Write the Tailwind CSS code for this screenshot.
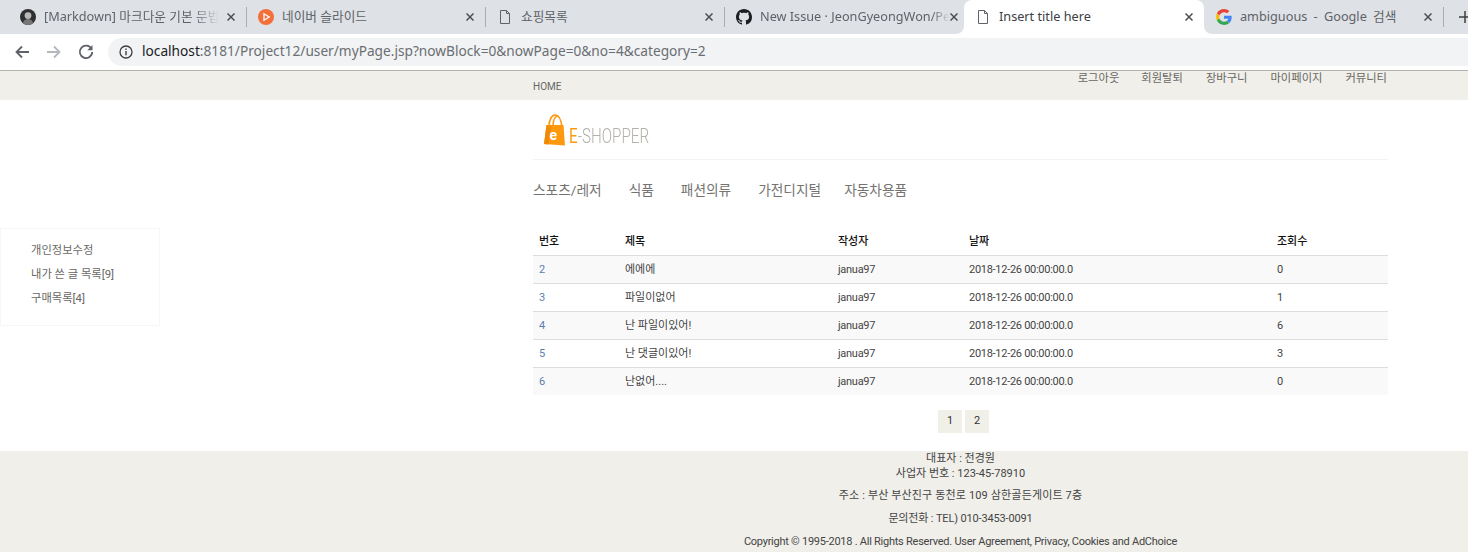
<!DOCTYPE html>
<html lang="ko">
<head>
  <meta charset="UTF-8" />
  <meta name="viewport" content="width=device-width, initial-scale=1.0" />
  <title>Insert title here</title>
  <script src="https://cdn.jsdelivr.net/npm/@tailwindcss/browser@4"></script>
</head>
<body class="h-[552px] w-[1468px] overflow-hidden bg-white font-['Roboto','Noto_Sans_CJK_KR',sans-serif] text-[11px] text-[#696763]">

  <!-- Browser tabs -->
  <div class="flex h-[34px] overflow-hidden bg-[#dee1e6] pl-[8px] font-['Noto_Sans','Noto_Sans_CJK_KR',sans-serif] text-[12.7px] text-[#5f6368]">
    <div class="my-[7px] flex w-[239px] shrink-0 items-center border-r border-[#a9acb1] pl-[12px] pr-[8px]">
      <svg class="h-4 w-4 shrink-0" viewBox="0 0 16 16"><circle cx="8" cy="8" r="8" fill="#2f2f2f"/><circle cx="8" cy="6.6" r="3.4" fill="#b9b9b9"/><path d="M3 14c.6-3 2.6-4 5-4s4.4 1 5 4a8 8 0 0 1-10 0z" fill="#777"/></svg>
      <span class="ml-[8px] w-[175px] overflow-hidden whitespace-nowrap [mask-image:linear-gradient(to_right,black_85%,transparent)]">[Markdown] 마크다운 기본 문법</span>
      <svg class="ml-auto mr-[3px] h-[8px] w-[8px] shrink-0" viewBox="0 0 8 8"><path d="M.5.5l7 7m0-7l-7 7" stroke="#4b4e52" stroke-width="1.5"/></svg>
    </div>
    <div class="my-[7px] flex w-[239px] shrink-0 items-center border-r border-[#a9acb1] pl-[11px] pr-[8px]">
      <svg class="h-4 w-4 shrink-0" viewBox="0 0 16 16"><circle cx="8" cy="8" r="8" fill="#f4703a"/><path d="M6 4.8v6.4L11.200 8z" fill="none" stroke="#fff" stroke-width="1.3"/></svg>
      <span class="ml-[8px] whitespace-nowrap">네이버 슬라이드</span>
      <svg class="ml-auto mr-[3px] h-[8px] w-[8px] shrink-0" viewBox="0 0 8 8"><path d="M.5.5l7 7m0-7l-7 7" stroke="#4b4e52" stroke-width="1.5"/></svg>
    </div>
    <div class="my-[7px] flex w-[239px] shrink-0 items-center border-r border-[#a9acb1] pl-[11px] pr-[8px]">
      <svg class="h-4 w-4 shrink-0" viewBox="0 0 16 16"><path d="M3.5 1.5h6l3 3v10h-9z M9.5 1.5v3h3" fill="none" stroke="#5f6368" stroke-width="1"/></svg>
      <span class="ml-[8px] whitespace-nowrap">쇼핑목록</span>
      <svg class="ml-auto mr-[3px] h-[8px] w-[8px] shrink-0" viewBox="0 0 8 8"><path d="M.5.5l7 7m0-7l-7 7" stroke="#4b4e52" stroke-width="1.5"/></svg>
    </div>
    <div class="my-[7px] flex w-[239px] shrink-0 items-center pl-[11px] pr-[8px]">
      <svg class="h-4 w-4 shrink-0" viewBox="0 0 16 16"><path fill="#1b1f23" d="M8 0C3.58 0 0 3.58 0 8c0 3.54 2.29 6.53 5.47 7.59.4.07.55-.17.55-.38 0-.19-.01-.82-.01-1.49-2.01.37-2.53-.49-2.69-.94-.09-.23-.48-.94-.82-1.13-.28-.15-.68-.52-.01-.53.63-.01 1.08.58 1.23.82.72 1.21 1.87.87 2.33.66.07-.52.28-.87.51-1.07-1.78-.2-3.64-.89-3.64-3.95 0-.87.31-1.59.82-2.15-.08-.2-.36-1.02.08-2.12 0 0 .67-.21 2.2.82.64-.18 1.32-.27 2-.27.68 0 1.36.09 2 .27 1.53-1.04 2.2-.82 2.2-.82.44 1.1.16 1.92.08 2.12.51.56.82 1.27.82 2.15 0 3.07-1.87 3.75-3.65 3.95.29.25.54.73.54 1.48 0 1.07-.01 1.93-.01 2.2 0 .21.15.46.55.38A8.013 8.013 0 0016 8c0-4.42-3.58-8-8-8z"/></svg>
      <span class="ml-[8px] whitespace-nowrap [mask-image:linear-gradient(to_right,black_90%,transparent)]">New Issue · JeonGyeongWon/Pe</span>
      <svg class="ml-auto mr-[3px] h-[8px] w-[8px] shrink-0" viewBox="0 0 8 8"><path d="M.5.5l7 7m0-7l-7 7" stroke="#4b4e52" stroke-width="1.5"/></svg>
    </div>
    <div class="relative flex w-[240px] shrink-0 items-center rounded-t-[8px] bg-white pl-[11px] pr-[8px] text-[#3c4043]">
      <svg class="absolute -left-[8px] bottom-0 h-[8px] w-[8px]" viewBox="0 0 8 8"><path d="M8 0v8H0a8 8 0 0 0 8-8z" fill="#fff"/></svg>
      <svg class="h-4 w-4 shrink-0" viewBox="0 0 16 16"><path d="M3.5 1.5h6l3 3v10h-9z M9.5 1.5v3h3" fill="none" stroke="#5f6368" stroke-width="1"/></svg>
      <span class="ml-[8px] whitespace-nowrap">Insert title here</span>
      <svg class="ml-auto mr-[3px] h-[8px] w-[8px] shrink-0" viewBox="0 0 8 8"><path d="M.5.5l7 7m0-7l-7 7" stroke="#4b4e52" stroke-width="1.5"/></svg>
      <svg class="absolute -right-[8px] bottom-0 h-[8px] w-[8px]" viewBox="0 0 8 8"><path d="M0 0v8h8a8 8 0 0 1-8-8z" fill="#fff"/></svg>
    </div>
    <div class="my-[7px] flex w-[240px] shrink-0 items-center border-r border-[#a9acb1] pl-[12px] pr-[8px]">
      <svg class="h-4 w-4 shrink-0" viewBox="0 0 48 48"><path fill="#EA4335" d="M24 9.5c3.54 0 6.71 1.22 9.21 3.6l6.85-6.85C35.9 2.38 30.47 0 24 0 14.62 0 6.51 5.38 2.56 13.22l7.98 6.19C12.43 13.72 17.74 9.5 24 9.5z"/><path fill="#4285F4" d="M46.98 24.55c0-1.57-.15-3.09-.38-4.55H24v9.02h12.94c-.58 2.96-2.26 5.48-4.78 7.18l7.73 6c4.51-4.18 7.09-10.36 7.09-17.65z"/><path fill="#FBBC05" d="M10.53 28.59c-.48-1.45-.76-2.99-.76-4.59s.27-3.14.76-4.59l-7.98-6.19C.92 16.46 0 20.12 0 24c0 3.88.92 7.54 2.56 10.78l7.97-6.19z"/><path fill="#34A853" d="M24 48c6.48 0 11.93-2.13 15.89-5.81l-7.73-6c-2.15 1.45-4.92 2.3-8.16 2.3-6.26 0-11.57-4.22-13.47-9.91l-7.98 6.19C6.51 42.62 14.62 48 24 48z"/></svg>
      <span class="ml-[8px] whitespace-nowrap [word-spacing:3px]">ambiguous - Google 검색</span>
      <svg class="ml-auto mr-[3px] h-[8px] w-[8px] shrink-0" viewBox="0 0 8 8"><path d="M.5.5l7 7m0-7l-7 7" stroke="#4b4e52" stroke-width="1.5"/></svg>
    </div>
    <svg class="ml-[15px] mt-[11px] h-[12px] w-[12px] shrink-0" viewBox="0 0 12 12"><path d="M6 0v12M0 6h12" stroke="#3c4043" stroke-width="1.5"/></svg>
  </div>

  <!-- Address bar -->
  <div class="flex h-[37px] items-center border-b border-[#b5b3ad] bg-white pl-[14px] font-['Noto_Sans',sans-serif] text-[13.7px]">
    <svg class="h-4 w-4" viewBox="0 0 16 16"><path d="M15 8H2.5M8 2.500L2.500 8 8 13.500" fill="none" stroke="#5f6368" stroke-width="1.8"/></svg>
    <svg class="ml-[16px] h-4 w-4" viewBox="0 0 16 16"><path d="M1 8h12.500M8 2.500L13.500 8 8 13.500" fill="none" stroke="#b4b7bb" stroke-width="1.8"/></svg>
    <svg class="ml-[16px] h-4 w-4" viewBox="0 0 16 16"><path d="M13.400 4.800A6.200 6.200 0 1 0 14.200 8" fill="none" stroke="#5f6368" stroke-width="1.8"/><path d="M14.500 1v5.200H9.300z" fill="#5f6368"/></svg>
    <div class="ml-[14px] flex h-[28px] flex-1 items-center rounded-l-[14px] bg-[#f1f3f4] pl-[11px] text-[#6b6e72]">
      <svg class="h-[14px] w-[14px]" viewBox="0 0 14 14"><circle cx="7" cy="7" r="6" fill="none" stroke="#3c4043" stroke-width="1.3"/><path d="M7 6v4.200M7 3.600v1.400" stroke="#3c4043" stroke-width="1.4"/></svg>
      <span class="ml-[9px] whitespace-nowrap pb-[2px]"><span class="text-[#202124]">localhost</span>:8181/Project12/user/myPage.jsp?nowBlock=0&amp;nowPage=0&amp;no=4&amp;category=2</span>
    </div>
  </div>

  <!-- Top strip -->
  <div class="h-[29px] bg-[#f0efea] pl-[533px]">
    <div class="flex w-[855px] justify-between pr-[1px]">
      <a class="mt-[10px] text-[10px] leading-[12px] text-[#696763]">HOME</a>
      <ul class="mt-[1px] flex text-[11.3px] leading-[14px]">
        <li class="mr-[22px]">로그아웃</li>
        <li class="mr-[23px]">회원탈퇴</li>
        <li class="mr-[23px]">장바구니</li>
        <li class="mr-[23px]">마이페이지</li>
        <li>커뮤니티</li>
      </ul>
    </div>
  </div>

  <!-- Main -->
  <div class="flex h-[351px]">
    <div class="w-[533px] shrink-0">
      <ul class="mt-[128px] flex h-[98px] w-[160px] flex-col gap-[8px] border border-[#f7f7f5] pl-[30px] pt-[14px] text-[11.3px] leading-[16px]">
        <li>개인정보수정</li>
        <li>내가 쓴 글 목록[9]</li>
        <li>구매목록[4]</li>
      </ul>
    </div>

    <div class="w-[855px]">
      <div class="flex h-[60px] items-start border-b border-[#f3f3f3] pl-[10px] pt-[14px]">
        <svg class="h-[32px] w-[24px]" viewBox="0 0 24 32">
          <path d="M3.500 11L1 30l21 1.500L20.500 11z" fill="#fe980f"/>
          <path d="M3.500 11L1 30l4.500.500L8 11z" fill="#f08a05"/>
          <path d="M6 13C6 5 9 1 12 1s6 3 7 12M10 13c0-7 2-11 5-11" fill="none" stroke="#fe980f" stroke-width="1.6"/>
          <text x="6.500" y="26" font-family="Roboto" font-size="14" font-weight="700" fill="#fff">e</text>
        </svg>
        <span class="ml-[2px] mt-[10px] origin-left scale-x-[.76] whitespace-nowrap text-[20px] leading-[24px] font-light text-[#b4b1ab]"><span class="font-normal text-[#fe980f]">E</span>-SHOPPER</span>
      </div>

      <nav class="flex h-[68px] items-start pt-[20px] text-[13.7px] leading-[20px] text-[#757370]">
        <a class="mr-[27px]">스포츠/레저</a>
        <a class="mr-[27px]">식품</a>
        <a class="mr-[27px]">패션의류</a>
        <a class="mr-[23px]">가전디지털</a>
        <a>자동차용품</a>
      </nav>

      <table class="w-full table-fixed border-collapse text-left text-[#444]">
        <colgroup>
          <col class="w-[86px]" /><col class="w-[213px]" /><col class="w-[131px]" /><col class="w-[308px]" /><col class="w-[117px]" />
        </colgroup>
        <thead>
          <tr class="h-[27px] text-[#111]">
            <th class="pl-[6px] pt-[2px] font-medium">번호</th>
            <th class="pl-[6px] pt-[2px] font-medium">제목</th>
            <th class="pl-[6px] pt-[2px] font-medium">작성자</th>
            <th class="pl-[6px] pt-[2px] font-medium">날짜</th>
            <th class="pl-[6px] pt-[2px] font-medium">조회수</th>
          </tr>
        </thead>
        <tbody>
          <tr class="h-[28px] border-t border-[#ddd] bg-[#f9f9f9]">
            <td class="pl-[6px] pt-[2px] text-[#5a7fb0]">2</td><td class="pl-[6px] pt-[2px]">에에에</td><td class="pl-[6px] pt-[2px] tracking-[-0.28px]">janua97</td><td class="pl-[6px] pt-[2px] tracking-[-0.28px]">2018-12-26 00:00:00.0</td><td class="pl-[6px] pt-[2px]">0</td>
          </tr>
          <tr class="h-[28px] border-t border-[#ddd]">
            <td class="pl-[6px] pt-[2px] text-[#5a7fb0]">3</td><td class="pl-[6px] pt-[2px]">파일이없어</td><td class="pl-[6px] pt-[2px] tracking-[-0.28px]">janua97</td><td class="pl-[6px] pt-[2px] tracking-[-0.28px]">2018-12-26 00:00:00.0</td><td class="pl-[6px] pt-[2px]">1</td>
          </tr>
          <tr class="h-[28px] border-t border-[#ddd] bg-[#f9f9f9]">
            <td class="pl-[6px] pt-[2px] text-[#5a7fb0]">4</td><td class="pl-[6px] pt-[2px]">난 파일이있어!</td><td class="pl-[6px] pt-[2px] tracking-[-0.28px]">janua97</td><td class="pl-[6px] pt-[2px] tracking-[-0.28px]">2018-12-26 00:00:00.0</td><td class="pl-[6px] pt-[2px]">6</td>
          </tr>
          <tr class="h-[28px] border-t border-[#ddd]">
            <td class="pl-[6px] pt-[2px] text-[#5a7fb0]">5</td><td class="pl-[6px] pt-[2px]">난 댓글이있어!</td><td class="pl-[6px] pt-[2px] tracking-[-0.28px]">janua97</td><td class="pl-[6px] pt-[2px] tracking-[-0.28px]">2018-12-26 00:00:00.0</td><td class="pl-[6px] pt-[2px]">3</td>
          </tr>
          <tr class="h-[28px] border-t border-[#ddd] bg-[#f9f9f9]">
            <td class="pl-[6px] pt-[2px] text-[#5a7fb0]">6</td><td class="pl-[6px] pt-[2px]">난없어....</td><td class="pl-[6px] pt-[2px] tracking-[-0.28px]">janua97</td><td class="pl-[6px] pt-[2px] tracking-[-0.28px]">2018-12-26 00:00:00.0</td><td class="pl-[6px] pt-[2px]">0</td>
          </tr>
        </tbody>
      </table>

      <div class="mt-[15px] flex justify-center gap-[3px] pl-[6px] text-[#333]">
        <a class="flex h-[23px] w-[24px] items-center justify-center bg-[#f0f0e9]">1</a>
        <a class="flex h-[23px] w-[24px] items-center justify-center bg-[#f0f0e9]">2</a>
      </div>
    </div>
  </div>

  <!-- Footer -->
  <footer class="h-[101px] bg-[#f0efea] pl-[533px] text-[#444]">
    <div class="flex w-[855px] flex-col items-center leading-[16px]">
      <p class="h-[15px]">대표자 : 전경원</p>
      <p class="mb-[6px]">사업자 번호 : 123-45-78910</p>
      <p class="mb-[7px] tracking-[0.15px]">주소 : 부산 부산진구 동천로 109 삼한골든게이트 7층</p>
      <p class="mb-[6.5px] tracking-[-0.15px]">문의전화 : TEL) 010-3453-0091</p>
      <p class="tracking-[-0.25px]">Copyright © 1995-2018 . All Rights Reserved. User Agreement, Privacy, Cookies and AdChoice</p>
    </div>
  </footer>

</body>
</html>
